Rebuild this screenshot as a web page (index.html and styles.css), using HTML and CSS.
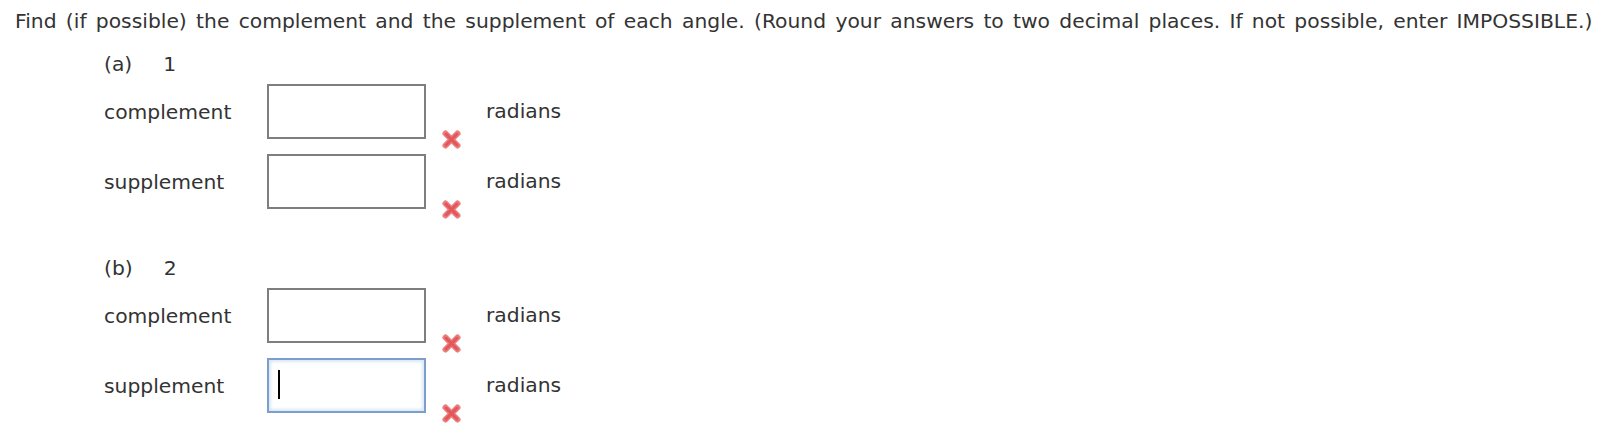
FILE: index.html
```html
<!DOCTYPE html>
<html lang="en">
<head>
<meta charset="utf-8">
<title>Complement and supplement</title>
<link rel="stylesheet" href="styles.css">
</head>
<body>
<div class="question">
  <p class="prompt">Find (if possible) the complement and the supplement of each angle. (Round your answers to two decimal places. If not possible, enter IMPOSSIBLE.)</p>

  <div class="part">
    <div class="part-head"><span class="part-id">(a)</span><span class="part-val">1</span></div>
    <div class="row">
      <span class="label">complement</span>
      <span class="field"><input class="answer" type="text"></span>
      <svg class="mark" viewBox="0 0 21 21" width="21" height="21" aria-hidden="true"><path class="x-out" d="M4.5 4.5L16.5 16.5M16.5 4.5L4.5 16.5"/><path class="x-in" d="M5 5L16 16M16 5L5 16"/></svg>
      <span class="unit">radians</span>
    </div>
    <div class="row">
      <span class="label">supplement</span>
      <span class="field"><input class="answer" type="text"></span>
      <svg class="mark" viewBox="0 0 21 21" width="21" height="21" aria-hidden="true"><path class="x-out" d="M4.5 4.5L16.5 16.5M16.5 4.5L4.5 16.5"/><path class="x-in" d="M5 5L16 16M16 5L5 16"/></svg>
      <span class="unit">radians</span>
    </div>
  </div>

  <div class="part">
    <div class="part-head"><span class="part-id">(b)</span><span class="part-val">2</span></div>
    <div class="row">
      <span class="label">complement</span>
      <span class="field"><input class="answer" type="text"></span>
      <svg class="mark" viewBox="0 0 21 21" width="21" height="21" aria-hidden="true"><path class="x-out" d="M4.5 4.5L16.5 16.5M16.5 4.5L4.5 16.5"/><path class="x-in" d="M5 5L16 16M16 5L5 16"/></svg>
      <span class="unit">radians</span>
    </div>
    <div class="row">
      <span class="label">supplement</span>
      <span class="field"><input class="answer focused" type="text"><span class="caret"></span></span>
      <svg class="mark" viewBox="0 0 21 21" width="21" height="21" aria-hidden="true"><path class="x-out" d="M4.5 4.5L16.5 16.5M16.5 4.5L4.5 16.5"/><path class="x-in" d="M5 5L16 16M16 5L5 16"/></svg>
      <span class="unit">radians</span>
    </div>
  </div>
</div>
</body>
</html>
```
FILE: styles.css
```css
html, body {
  margin: 0;
  padding: 0;
  background: #ffffff;
}

body {
  font-family: "DejaVu Sans", Verdana, sans-serif;
  color: #333333;
}

.question {
  padding: 9px 0 24px 15px;
}

.prompt {
  margin: 0;
  font-size: 20.3px;
  line-height: 24px;
  word-spacing: 2.85px;
  white-space: nowrap;
}

.part {
  margin-left: 89px;
  margin-top: 19px;
}

.part + .part {
  margin-top: 47px;
}

.part-head {
  display: flex;
  gap: 31px;
  font-size: 20.3px;
  line-height: 24px;
  margin-bottom: 8px;
}

.row {
  display: flex;
  align-items: flex-start;
  height: 55px;
  font-size: 20.3px;
}

.row + .row {
  margin-top: 15px;
}

.label {
  width: 163px;
  line-height: 55px;
  padding-top: 1px;
}

.field {
  position: relative;
  display: block;
  width: 159px;
  height: 55px;
}

.answer {
  display: block;
  box-sizing: border-box;
  width: 159px;
  height: 55px;
  margin: 0;
  padding: 0 8px;
  border: 2px solid #7e7e7e;
  border-radius: 0;
  background: #ffffff;
  font: inherit;
  outline: none;
}

.answer.focused {
  border-color: #7d9ecb;
  box-shadow: inset 0 0 3px 2px rgba(150, 185, 230, 0.35);
}

.caret {
  position: absolute;
  left: 11px;
  top: 12px;
  width: 2px;
  height: 29px;
  background: #000000;
}

.mark {
  flex: none;
  align-self: flex-end;
  margin: 0 0 -11px 15px;
}

.x-out {
  stroke: #ec7d7e;
  stroke-width: 6;
  stroke-linecap: round;
  fill: none;
}

.x-in {
  stroke: #e2585a;
  stroke-width: 3;
  stroke-linecap: round;
  fill: none;
}

.unit {
  margin-left: 24px;
  line-height: 55px;
}
```
